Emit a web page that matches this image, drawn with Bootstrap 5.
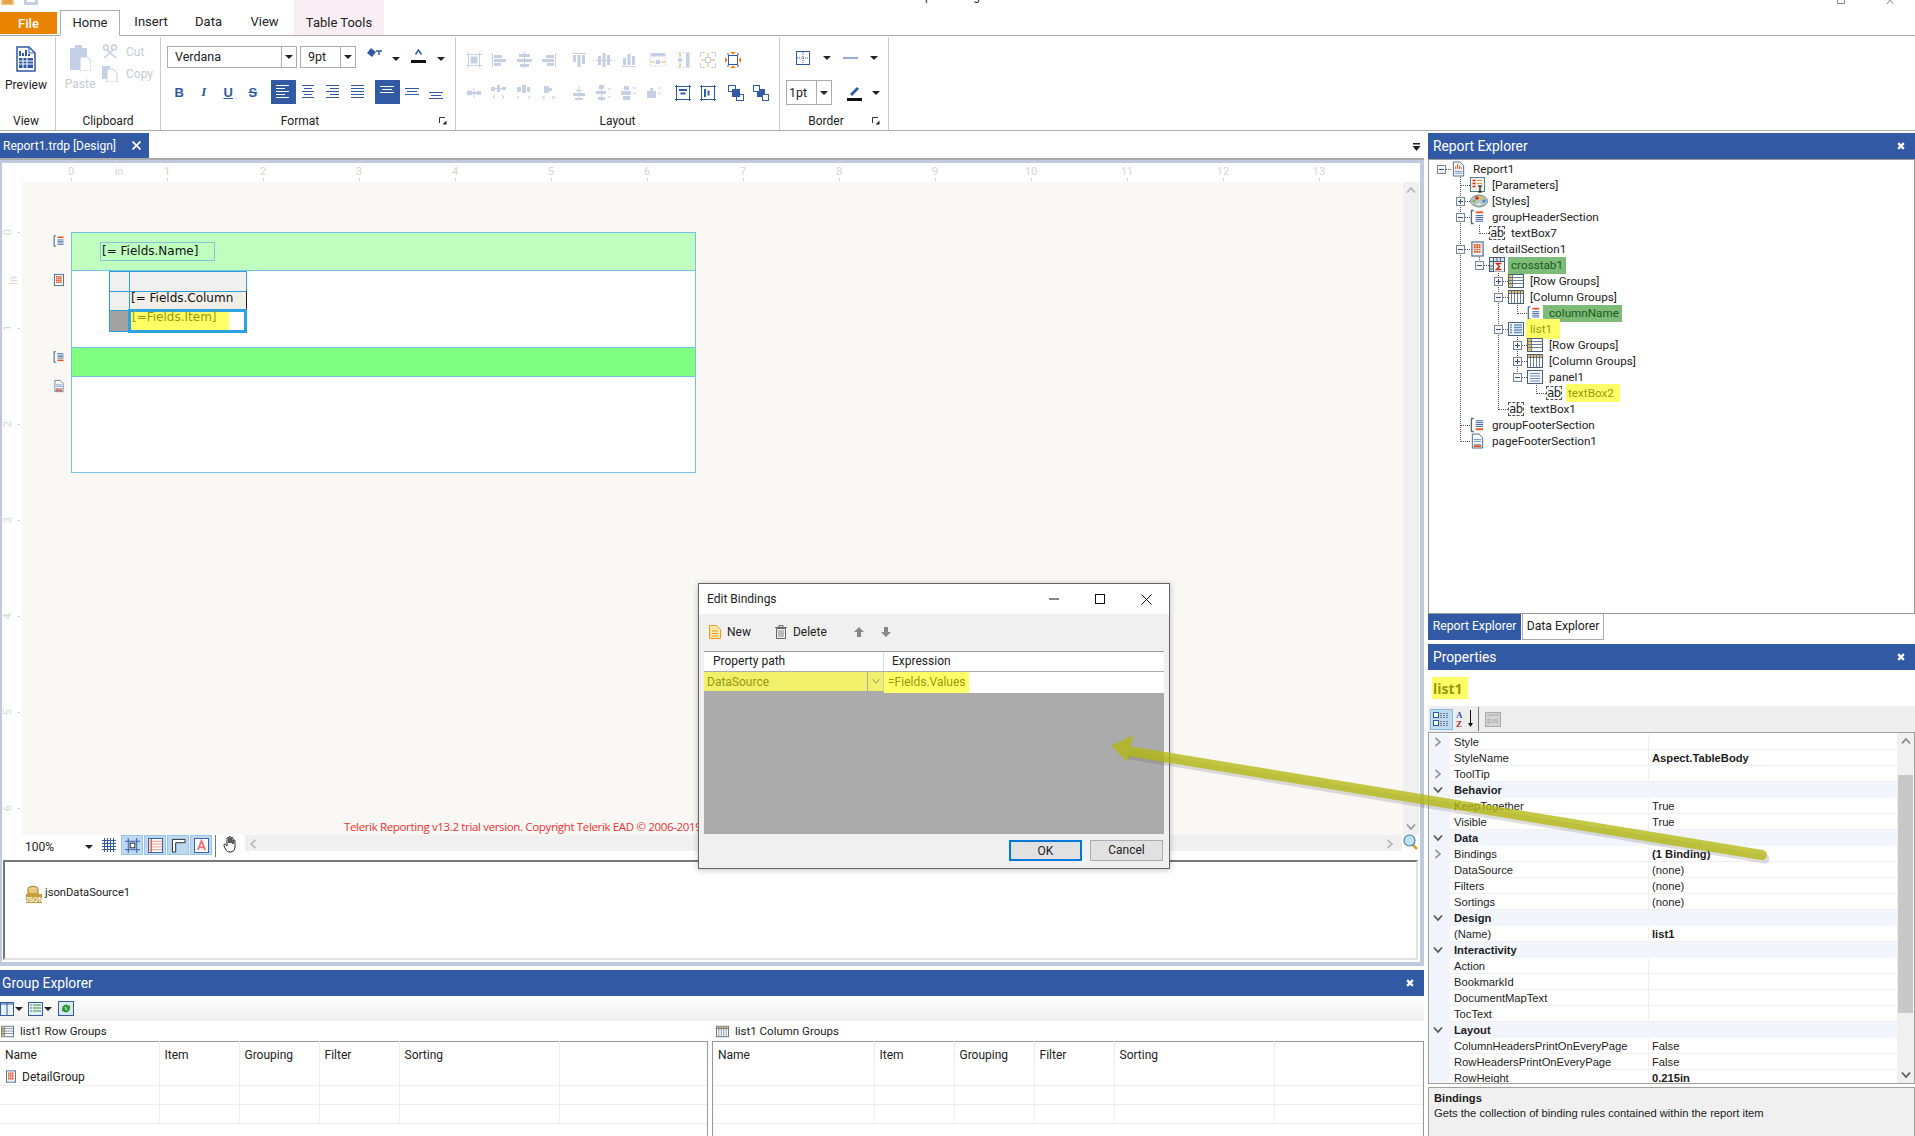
<!DOCTYPE html>
<html lang="en">
<head>
<meta charset="utf-8">
<title>Telerik Report Designer</title>
<link rel="stylesheet" href="https://cdn.jsdelivr.net/npm/bootstrap@5.3.0/dist/css/bootstrap.min.css">
<style>
:root{--blue:#3259a3;--dis:#c6d0e4;--line:#ababab}
html,body{margin:0;width:1915px;height:1136px;overflow:hidden;background:#fff}
body{position:relative;font:12px/16px Roboto,"Liberation Sans",sans-serif;color:#222}
.defs{position:absolute;width:0;height:0}
svg{display:block;flex:none}
/* window top */
.topbar{height:36px;border-bottom:1px solid var(--line)}
.winrow{height:10px;overflow:hidden}
.qat{height:5px;width:60px}
.wintitle{width:130px;margin-left:813px;margin-top:-10px;font-size:12px;line-height:13px;color:#333;white-space:nowrap;height:13px}
.winbtns{height:5px;width:58px;margin-left:auto;margin-right:20px}
.tabfile{width:57px;height:22px;background:#e98300;color:#fff;font-weight:500;font-size:13px;line-height:21px;text-align:center;margin-top:2px;border:0;padding:0;flex:none}
.rtab{font-size:13px;line-height:24px;height:25px;color:#222;text-align:center;flex:none}
.rtab.on{width:60px;margin-left:3px;border:1px solid var(--line);border-bottom:1px solid #fff;background:#fff;height:26px}
.rtab.t1{width:62px}.rtab.t2{width:53px}.rtab.t3{width:59px}
.rtab.tools{width:90px;background:#f9eef4;height:35px;padding-top:10px;margin-top:-10px;line-height:26px}
/* ribbon */
.ribbon{height:95px;border-bottom:1px solid var(--line)}
.rgrp{height:93px;margin-top:1px;border-right:1px solid #ccc;flex:none;display:flex;flex-direction:column}
.rgrp .body{height:74px;flex:none}
.g-view{width:56px}.g-clip{width:105px}.g-fmt{width:295px}.g-lay{width:324px}.g-bor{width:109px}
.g-view .body{padding-top:8px;padding-right:3px}
.g-view .lbl{padding-right:3px}
.g-clip .body{padding:7px 0 0 10px}
.g-fmt .body{padding:9px 0 0 6px}
.g-lay .body{padding:10px 0 0 5px}
.g-bor .body{padding:8px 0 0 6px}
.rgrp .lbl{flex:1;display:flex;align-items:center;justify-content:center;font-size:12px;color:#222}
.lblwrap{padding-right:8px}
.lblwrap span{flex:1;text-align:center}
.g-bor .lblwrap{padding-right:8px}
.bigic{margin-top:1px}
.bigtx{margin-top:5px;font-size:12px}
.pastecol{width:28px}
.cutcol{gap:6px}
.dis{color:#c6cbd6}
.cb{height:22px;border:1px solid var(--line);display:flex;align-items:center;background:#fff;font-size:12.5px;flex:none}
.cb span{flex:1;padding-left:7px}
.cb b{width:15px;height:100%;border-left:1px solid var(--line);display:flex;align-items:center;justify-content:center;flex:none}
.cb-font{width:130px}.cb-size{width:56px;margin-left:3px}
.cb-bw{width:46px;height:25px}.cb-bw span{padding-left:2px}
.tri{width:0;height:0;border:4px solid transparent;border-top:4px solid #222;border-bottom:0;flex:none;display:block}
.ic-fill{margin:-8px 0 0 11px}
.tri-a{margin:0 0 -3px 10px}
.ic-fc{margin:-3px 0 0 11px}
.tri-b{margin:0 0 -3px 11px}
.fmt2{margin-top:12px}
.rb{width:24.5px;height:24px;display:flex;align-items:center;justify-content:center;color:var(--blue);flex:none;font:700 13px "Liberation Sans",sans-serif}
.rb.it{font:italic 700 13px "Liberation Serif",serif}
.rb.act{background:var(--blue);color:#fff}
.mr6{margin-right:6px}.mr5{margin-right:5px}.mr4{margin-right:4px}.mr3{margin-right:3px}
.lc{width:25px;height:25px;display:flex;align-items:center;justify-content:center;color:var(--blue);flex:none}
.lc.off{color:var(--dis)}
.lay2{margin-top:8px}
.brow1{height:25px}
.ic-bd{margin-left:10px}
.tri-c{margin-left:13px}
.ic-ln{margin-left:12px}
.tri-d{margin-left:12px}
.brow2{margin-top:10px}
.ic-pen{margin-left:15px}
.tri-e{margin-left:10px}
/* left */
.main{height:1005px}
.leftc{width:1424px;flex:none}
.docstrip{height:29px;padding-top:2px;border-bottom:2px solid var(--line);flex:none}
.doctab{width:149px;height:25px;background:var(--blue);color:#fff;font-size:12px;padding-left:3px}
.docmenu{margin:10px 3px 0 auto}
.frame{height:806px;border:solid #c0cade;border-width:3px 4px 4px 2px;flex:none;background:#fff}
.rulert{height:19px;padding-left:45px;flex:none}
.rulert div{width:48px;flex:none;text-align:center;color:#d9d5cd;font-size:11px;line-height:13px;padding-top:2px}
.rulert i{display:block;width:1px;height:3px;background:#d9d5cd;margin:0 auto}
.canvasrow{height:653px;flex:none}
.ruleL{width:20px;padding-top:26px;flex:none;overflow:hidden}
.ruleL div{height:48px;display:flex;align-items:center;justify-content:flex-end;padding-right:2px;color:#d9d5cd;font-size:11px;gap:3px}
.ruleL span{writing-mode:vertical-rl;transform:rotate(180deg);line-height:12px}
.ruleL i{display:block;width:3px;height:1px;background:#d9d5cd}
.canvas{width:1381px;background:#f9f8f5;flex:none;padding-top:50px}
.sec{display:flex;flex:none}
.gut{width:49px;padding-left:31px;padding-top:1px;flex:none}
.band{width:625px;border:1px solid #74c3e6;margin-top:-1px;flex:none;background:#fff}
.s1{height:39px;background:#c0ffc0;padding:9px 0 0 28px;margin-top:0}
.s2{height:78px;padding-left:37px}
.s3{height:30px;background:#80ff80}
.s4{height:97px}
.vf{font:12px/17px "DejaVu Sans","Liberation Sans",sans-serif;color:#111;white-space:nowrap}
.namebox{width:115px;height:19px;border:1px solid #7cc8d8;padding-left:1px}
.xt{display:grid;grid-template-columns:20px 117px;grid-template-rows:20px 19px 21px;width:137px}
.xt>div{border:1px solid #2c9fd8;margin:0 -1px -1px 0;background:#f0f0f0}
.xt .cell2{background:#f1eee8;border-right-color:#222;border-bottom-color:#222;padding-left:1px;line-height:12px}
.xt .g{background:#a2a2a2}
.xt .sel{border:3px solid #2ca3e0;background:#fff;margin:-1px -1px -2px -1px;z-index:1;display:flex}
.xt .sel span{background:#ffff66;color:#98980c;width:98px;padding-left:1px;display:block;line-height:10px;height:100%}
.wm{margin-top:auto;padding-left:322px;color:#f03030;font-size:11.5px;line-height:14px;white-space:nowrap;padding-bottom:1px;font-family:"Open Sans",Roboto,sans-serif;letter-spacing:-.35px}
.vsb{width:16px;background:#f0f0f0;flex:none}
.vsb svg{opacity:.55}
.tbrow{height:24px;flex:none;margin-top:0}
.zoomcb{width:76px;height:23px;margin-left:19px;padding:0 4px;background:#fff;font-size:12px;flex:none}
.ic-grid{margin:3px 5px 0}
.tog{width:22px;height:20px;background:#bcd9f1;border:1px solid #9cc4e6;margin-right:1px;display:flex;align-items:center;justify-content:center;flex:none}
.vsep{width:1px;height:22px;background:#777;margin:0 6px 0 2px}
.hsb{height:23px;flex:1;margin-left:6px;background:linear-gradient(#f0f0f0 0 16px,#fff 16px)}
.flipx{transform:scaleX(-1)}
.mag{margin:-1px 1px 0}
.tray{height:100px;margin:1px 2px 0 1px;border:2px solid #e2e2e2;border-top-color:#777;border-left-color:#777;padding:24px 0 0 21px;flex:none;font-size:11.2px}
.tray span{margin:-1px 0 0 3px}
.pbar{height:26px;background:var(--blue);color:#fff;font-size:13.8px;line-height:26px;padding:0 10px 0 5px;flex:none}
.pbar.ge{margin-top:4px;padding-left:2px}
.pbar.pp{margin-top:4px}
.gtb{height:25px;background:linear-gradient(#fff,#efefef);flex:none}
.tb-t1{margin-left:1px}.tb-l{margin-left:5px}.tb-r{margin-left:6px}
.gpanels{gap:4px;flex:1;overflow:hidden}
.gp{width:708px;flex:none;height:115px;overflow:hidden}
.gp+.gp{width:712px}
.gl{height:20px;gap:5px;font-size:11.5px}
.gp+.gp .gl{padding-left:3px}
.gtbl{table-layout:fixed;width:100%;margin:0;border-top:1px solid #999;font-size:12px}
.gp+.gp .gbox{border-left:1px solid #999;border-right:1px solid #999}
.gp .gbox{border-right:1px solid #999;height:100px}
.gtbl col.c1{width:159px}.gp+.gp .gtbl col.c1{width:161px}
.gtbl col.c2{width:80px}.gtbl col.c5{width:160px}
.gtbl>*>tr>*{padding:0 0 0 5px;border:0;border-bottom:1px solid #eee;border-right:1px solid #eee;font-weight:400;height:19px;box-shadow:none;white-space:nowrap;vertical-align:middle;background:#fff;color:#222}
.gtbl thead th{height:27px;border-bottom:0;padding-bottom:0}
.gtbl .f td{height:17px}
.gtbl tr>*:last-child{border-right:0}
.dg{gap:5px}
/* right */
.rightc{width:487px;margin-left:4px;padding-top:2px;flex:none}
.tree{height:455px;border:1px solid #999;padding:1px 0 0 3px;flex:none;font-size:11.7px}
.tr{height:16px;display:flex;align-items:center;white-space:nowrap}
.c{width:19px;height:16px;flex:none;display:flex;align-items:center;justify-content:center;background-repeat:no-repeat}
.c.v{background-image:repeating-linear-gradient(#555 0 1px,transparent 1px 2px);background-position:9px 0;background-size:1px 100%}
.c.h{background-image:repeating-linear-gradient(90deg,#555 0 1px,transparent 1px 2px);background-position:10px 8px;background-size:9px 1px}
.c.vh{background-image:repeating-linear-gradient(#555 0 1px,transparent 1px 2px),repeating-linear-gradient(90deg,#555 0 1px,transparent 1px 2px);background-position:9px 0,10px 8px;background-size:1px 100%,9px 1px}
.c.uh{background-image:repeating-linear-gradient(#555 0 1px,transparent 1px 2px),repeating-linear-gradient(90deg,#555 0 1px,transparent 1px 2px);background-position:9px 0,10px 8px;background-size:1px 9px,9px 1px}
.mn,.pl{display:block;width:9px;height:9px;border:1px solid #7b8794;background:#f4f6f8 linear-gradient(#39517f,#39517f) center/5px 1px no-repeat}
.pl::after{content:"";display:block;width:1px;height:5px;background:#39517f;margin:1px 0 0 3px}
.ti{width:19px;flex:none;display:flex;align-items:center}
.ti.w16{width:16px}.ti.w18{width:18px}.ti.w20{width:20px}
.tt{padding:0 3px;line-height:16px}
.hlg{background:#7dbb78;color:#1c5a22;height:17px}
.hlg.cn{padding-left:6px}
.hly{background:#ffff66;color:#98980c}
.hly.l1{padding:2px 8px 2px 4px;height:20px}
.hly.t2{padding:1px 6px 1px 2px;height:18px}
.ab{display:block;width:16px;height:14px;border:1px dashed #555;font:11.5px/12px "DejaVu Sans",sans-serif;text-align:center;color:#222;letter-spacing:-.5px}
.wtabs{height:26px;flex:none}
.wt{background:var(--blue);color:#fff;width:93px;text-align:center;line-height:24px;font-size:12.2px}
.wt.off{background:#fff;color:#222;border:1px solid var(--line);border-top:0;width:82px;margin-left:1px}
.phead{height:36px;padding:7px 0 0 4px;flex:none}
.phead span{display:inline-block;background:#ffff66;color:#98980c;font:700 14px/20px "Open Sans",sans-serif;height:22px;padding-top:2px;width:36px;padding-left:1px;vertical-align:top}
.ptb{height:26px;background:#eee;padding-left:2px;gap:3px;flex:none}
.ptog{width:23px;height:21px;background:#bcdcf4;border:1px solid #86bde8;display:flex;align-items:center;justify-content:center}
.sep{width:1px;height:24px;background:#777;margin:0 3px 0 1px}
.pgrid{height:352px;border:1px solid #a0a0a0;overflow:hidden;flex:none;font:11.2px/17px "Liberation Sans",Arial,sans-serif;color:#1c1c1c}
.rows{width:468px;flex:none;padding-top:1px}
.pr{height:16px;display:flex;background:#fff;border-bottom:1px solid #f0f0f0}
.pr .k{width:21px;background:#f2f5fb;flex:none;display:flex;align-items:center;justify-content:center;padding-right:3px}
.pr .n{width:199px;flex:none;padding-left:4px;border-right:1px solid #f0f0f0;white-space:nowrap;height:15px}
.pr .w{flex:1;padding-left:3px;height:15px}
.pr.cat{background:#f2f5fb;font-weight:700;height:17px;margin-bottom:-1px;line-height:16px}
.pr.cat .n{border:0}
.pr b{font-weight:700}
.psb{width:17px;background:#f0f0f0;flex:none;display:flex;flex-direction:column;align-items:center}
.thumb{width:15px;height:238px;background:#c8c8c8;margin-top:30px;flex:none}
.desc{height:50px;margin-top:3px;border:1px solid #a0a0a0;background:#f0f0f0;padding:3px 5px;font:11.2px/15px "Liberation Sans",Arial,sans-serif;color:#1c1c1c;flex:none}
/* dialog */
.dlg{position:absolute;left:698px;top:583px;width:472px;height:286px;background:#f0f0f0;border:1px solid #666;box-shadow:0 1px 6px rgba(0,0,0,.25);z-index:5}
.dt{height:30px;background:#fff;padding-left:8px;font-size:12px;flex:none}
.dctl{width:46px;height:30px;display:flex;align-items:center;justify-content:center}
.dtb{height:37px;padding:0 0 1px 10px;flex:none;font-size:12px;gap:5px}
.dtb span{margin-left:1px}
.dtb .d1{margin-left:19px}.dtb .d2{margin-left:22px}.dtb .d3{margin-left:12px}
.dgrid{margin:0 5px;height:183px;background:#ababab;border-top:1px solid #999;flex:none}
.dh{height:20px;background:#fff;border-bottom:1px solid var(--line)}
.dh div{padding-left:8px;line-height:19px}
.dh div:first-child{width:180px;border-right:1px solid #ddd;padding-left:9px}
.dr{height:21px;background:#fff;color:#98980c;line-height:20px}
.dc1{width:163px;background:#f0f06a;padding-left:3px;border-bottom:2px solid #aaa}
.dc2{width:17px;background:#f0f06a;border-left:1px solid #aaa;border-right:1px solid #ccc;border-bottom:2px solid #aaa;display:flex;align-items:center;justify-content:center}
.dc3{width:85px;background:#ffff66;padding-left:4px}
.dbtns{gap:8px;padding:6px 6px 0 0;justify-content:flex-end}
.dbtn{width:73px;height:21px;padding:0;font-size:12px;line-height:17px;background:#e1e1e1;border:1px solid #adadad;border-radius:0;color:#222}
.dbtn.pri{border:2px solid #0078d7;line-height:16px}
.arrow{position:absolute;left:0;top:0;z-index:9;pointer-events:none}
</style>
</head>
<body>
<svg class="defs" xmlns="http://www.w3.org/2000/svg">
<symbol id="al-l" viewBox="0 0 16 16"><path d="M1 1.5h13M1 4.5h9M1 7.5h13M1 10.5h9M1 13.5h13" stroke="currentColor" fill="none"/></symbol>
<symbol id="al-c" viewBox="0 0 16 16"><path d="M2 1.5h12M4 4.5h8M2 7.5h12M4 10.5h8M2 13.5h12" stroke="currentColor" fill="none"/></symbol>
<symbol id="al-r" viewBox="0 0 16 16"><path d="M2 1.5h13M6 4.5h9M2 7.5h13M6 10.5h9M2 13.5h13" stroke="currentColor" fill="none"/></symbol>
<symbol id="al-j" viewBox="0 0 16 16"><path d="M2 1.5h13M2 4.5h13M2 7.5h13M2 10.5h13M2 13.5h13" stroke="currentColor" fill="none"/></symbol>
<symbol id="va-t" viewBox="0 0 16 16"><path d="M1 2.5h14M3 5.5h10M1 8.5h14" stroke="currentColor" fill="none"/></symbol>
<symbol id="va-m" viewBox="0 0 16 16"><path d="M1 4.5h14M3 7.5h10M1 10.5h14" stroke="currentColor" fill="none"/></symbol>
<symbol id="va-b" viewBox="0 0 16 16"><path d="M1 8.5h14M3 11.5h10M1 14.5h14" stroke="currentColor" fill="none"/></symbol>
<symbol id="launch" viewBox="0 0 8 8"><path d="M.5 6V.5H6" stroke="#333" fill="none"/><path d="M7.5 7.5H3.5L7.5 3.5z" fill="#222"/></symbol>
<symbol id="l1" viewBox="0 0 16 16"><path d="M0 2.5h16M0 13.5h16M2.5 0v16M13.5 0v16" stroke="currentColor" fill="none"/><rect x="4.5" y="4.5" width="7" height="7" fill="currentColor"/></symbol>
<symbol id="l2" viewBox="0 0 16 16"><path d="M1.5 1v14" stroke="currentColor"/><path d="M3 3h8v3H3zM3 7h12v3H3zM3 11h7v3H3z" fill="currentColor"/></symbol>
<symbol id="l3" viewBox="0 0 16 16"><path d="M8.5 0v16" stroke="currentColor"/><path d="M3 2h11v3H3zM1 7h15v3H1zM4 12h9v3H4z" fill="currentColor"/></symbol>
<symbol id="l4" viewBox="0 0 16 16"><path d="M14.5 1v14" stroke="currentColor"/><path d="M5 3h8v3H5zM1 7h12v3H1zM6 11h7v3H6z" fill="currentColor"/></symbol>
<symbol id="l5" viewBox="0 0 16 16"><path d="M1 1.5h14" stroke="currentColor"/><path d="M2 3h3v7H2zM6.5 3h3v12h-3zM11 3h3v9h-3z" fill="currentColor"/></symbol>
<symbol id="l6" viewBox="0 0 16 16"><path d="M0 8.5h16" stroke="currentColor"/><path d="M2 4h3v9H2zM6.5 1h3v14h-3zM11 3h3v10h-3z" fill="currentColor"/></symbol>
<symbol id="l7" viewBox="0 0 16 16"><path d="M1 14.5h14" stroke="currentColor"/><path d="M2 6h3v7H2zM6.5 2h3v11h-3zM11 4h3v9h-3z" fill="currentColor"/></symbol>
<symbol id="l8" viewBox="0 0 16 16"><rect x=".5" y="1" width="15" height="3.5" fill="currentColor"/><path d="M.5 6v8h15V6" stroke="currentColor" stroke-dasharray="1 1" fill="none"/><rect x="6" y="8" width="4" height="4" fill="currentColor"/><path d="M1 10h4M11 10h4" stroke="#f6d5a8" stroke-width="2"/></symbol>
<symbol id="l9" viewBox="0 0 16 16"><rect x="11" y=".5" width="3.5" height="15" fill="currentColor"/><path d="M9 .5H2M9 15.5H2" stroke="currentColor" stroke-dasharray="1 1" fill="none"/><rect x="3" y="6" width="4" height="4" fill="currentColor"/><path d="M5 1v4M5 11v4" stroke="#f6d5a8" stroke-width="2"/></symbol>
<symbol id="l10" viewBox="0 0 16 16"><path d="M.5 5V.5H5M11 .5h4.500V5M15.500 11v4.500H11M5 15.500H.5V11" stroke="currentColor" fill="none"/><rect x="5.500" y="5.500" width="5" height="5" fill="none" stroke="currentColor"/><path d="M8 1v4M8 11v4M1 8h4M11 8h4" stroke="#f6d5a8" stroke-width="2"/></symbol>
<symbol id="l11" viewBox="0 0 16 16"><rect x="3.500" y="3.500" width="9" height="9" fill="#fff" stroke="#3259a3"/><path d="M5 0l3 2.500L11 0zM5 16l3-2.500L11 16zM0 5l2.500 3L0 11zM16 5l-2.500 3L16 11z" fill="#e98300"/><path d="M3 1v2M13 1v2M3 13v2M13 13v2" stroke="#3259a3"/></symbol>
<symbol id="m1" viewBox="0 0 16 16"><path d="M3 5v6M8 3v10" stroke="currentColor"/><path d="M1 6h5v4H1zM6 7h5v2H6zM11 6h4v4h-4z" fill="currentColor"/></symbol>
<symbol id="m2" viewBox="0 0 16 16"><path d="M0 2h4v4H0zM6 0h3v7H6zM11 2h4v3h-4z" fill="currentColor"/><path d="M4 3.500h2M9 3.500h2" stroke="currentColor"/><path d="M4 10l-2 2 2 2M11 10l2 2-2 2" stroke="currentColor" fill="none"/></symbol>
<symbol id="m3" viewBox="0 0 16 16"><path d="M1 2h4v5H1zM6 0h4v8H6zM11 2h3v5h-3z" fill="currentColor"/><path d="M1 11l2 1.500-2 1.500M14 11l-2 1.500 2 1.500" stroke="currentColor" fill="none"/></symbol>
<symbol id="m4" viewBox="0 0 16 16"><path d="M3 1h5v2h3v3H8v2H3z" fill="currentColor"/><path d="M1 11l3 1.500-3 1.500M14 11l-3 1.500 3 1.500" stroke="currentColor" fill="none"/></symbol>
<symbol id="m5" viewBox="0 0 16 16"><path d="M8 1v14" stroke="currentColor"/><path d="M5 5h6v1H5zM2 8h12v3H2zM4 13h8v2H4z" fill="currentColor"/></symbol>
<symbol id="m6" viewBox="0 0 16 16"><path d="M5.500 1v15" stroke="currentColor"/><path d="M3 0h5v4H3zM0 6h10v3H0zM2 12h7v3H2z" fill="currentColor"/><path d="M12 5l1.500-2L15 5M12 11l1.500 2L15 11" stroke="currentColor" fill="none"/></symbol>
<symbol id="m7" viewBox="0 0 16 16"><path d="M3 1h5v4H3zM0 6h10v4H0zM2 11h7v4H2z" fill="currentColor"/><path d="M12 2l1.500 2L15 2M12 9l1.500-2L15 9" stroke="currentColor" fill="none"/></symbol>
<symbol id="m8" viewBox="0 0 16 16"><path d="M4 3h3v3h3v7H1V6h3z" fill="currentColor"/><path d="M12 2l1.500 2L15 2M12 9l1.500-2L15 9" stroke="currentColor" fill="none"/></symbol>
<symbol id="m9" viewBox="0 0 16 16"><path d="M0 1.500h16M0 14.500h16M1.500 0v16M14.500 0v16" stroke="currentColor" fill="none"/><path d="M4 4h8v2H4zM5.500 7.500h5v2h-5z" fill="currentColor"/></symbol>
<symbol id="m10" viewBox="0 0 16 16"><path d="M0 1.500h16M0 14.500h16M1.500 0v16M14.500 0v16" stroke="currentColor" fill="none"/><path d="M4 4h2v8H4zM7.500 5.500h2v5h-2z" fill="currentColor"/></symbol>
<symbol id="m11" viewBox="0 0 16 16"><rect x=".5" y=".5" width="7" height="6" fill="#fff" stroke="currentColor"/><rect x="8.500" y="9.500" width="7" height="6" fill="#fff" stroke="currentColor"/><rect x="4" y="4" width="8" height="8" fill="currentColor"/></symbol>
<symbol id="m12" viewBox="0 0 16 16"><rect x="4" y="4" width="8" height="8" fill="currentColor"/><rect x=".5" y=".5" width="6" height="6" fill="#fff" stroke="currentColor"/><rect x="9.500" y="9.500" width="6" height="6" fill="#fff" stroke="currentColor"/></symbol>
<symbol id="sh" viewBox="0 0 16 16"><path d="M1.500 1v14M1 1h3M1 15h3" stroke="#4d7080" fill="none" stroke-width="1.500"/><path d="M6 3h8" stroke="#e8501a" stroke-width="2"/><path d="M6 6.500h8M6 8.500h8M6 10.500h8M6 12.500h8" stroke="#3259a3"/></symbol>
<symbol id="sf" viewBox="0 0 16 16"><path d="M1.500 1v14M1 1h3M1 15h3" stroke="#4d7080" fill="none" stroke-width="1.500"/><path d="M6 3.500h8M6 5.500h8M6 7.500h8M6 9.500h8" stroke="#3259a3"/><path d="M6 12.500h8" stroke="#e8501a" stroke-width="2"/></symbol>
<symbol id="sd" viewBox="0 0 16 16"><rect x="2" y=".5" width="12" height="15" fill="#f4f7fa" stroke="#47688a" stroke-width="1.200"/><path d="M4 3.500h8M4 6h8M4 8.500h8M4 11h8" stroke="#e8501a" stroke-width="1.800" stroke-dasharray="2 .6"/></symbol>
<symbol id="sp" viewBox="0 0 16 16"><path d="M2.500.5h7l4 4v11h-11z" fill="#f8fafc" stroke="#47688a"/><path d="M4 6.500h8M4 8.500h8" stroke="#6a8fc2"/><path d="M4 11.500h8" stroke="#6a8fc2"/><path d="M4 13.500h8" stroke="#e8501a" stroke-width="2"/></symbol>
<symbol id="rep" viewBox="0 0 16 16"><path d="M2.500.5h7l4 4v11h-11z" fill="#f8fafc" stroke="#47688a"/><path d="M5 8V5M7 8V2.500M9 8V4.500M11 8V6" stroke="#e8501a"/><path d="M4 10.500h8M4 12.500h8" stroke="#6a8fc2"/></symbol>
<symbol id="par" viewBox="0 0 16 16"><rect x=".5" y=".5" width="14" height="14" fill="#f4f1ea" stroke="#4d8088"/><path d="M2.500 3.500h3M2.500 6.500h3M2.500 9.500h3" stroke="#d42a1a" stroke-width="1.500"/><path d="M7 3.500h5M7 6.500h5" stroke="#e89a40"/><path d="M8 9h4M8 15h4M10 9v6" stroke="#111" stroke-width="1.200"/></symbol>
<symbol id="pal" viewBox="0 0 18 16"><ellipse cx="9" cy="8" rx="8.500" ry="6" fill="#b8c6c2" stroke="#7b8d88"/><circle cx="7" cy="5" r="1.800" fill="#d42a2a"/><circle cx="11" cy="5" r="1.800" fill="#e8c030"/><circle cx="14" cy="8" r="1.800" fill="#4a90d8"/><circle cx="4" cy="8" r="1.500" fill="#7ab060"/><ellipse cx="9" cy="11" rx="2" ry="1.200" fill="#e8e8e0"/></symbol>
<symbol id="xt" viewBox="0 0 16 16"><rect x=".5" y=".5" width="15" height="14" fill="#dfe4ea" stroke="#48607a"/><path d="M.5 4.500h15M.5 9h4M.5 12h4M4.500.5v14M8 .5v4M11.500.5v4" stroke="#48607a"/><rect x="5" y="5" width="10" height="9.500" fill="#fff"/><path d="M12.500 6.500h-5l3 3-3 3h5" stroke="#d42a1a" stroke-width="1.500" fill="none"/></symbol>
<symbol id="rg" viewBox="0 0 16 16"><rect x=".5" y="1.500" width="15" height="13" fill="#fff" stroke="#48607a"/><rect x="1" y="2" width="3" height="12" fill="#e8c070"/><path d="M.5 4.500h15M.5 7.500h15M.5 10.500h15M4.500 1.500v13" stroke="#48607a" stroke-width=".8"/></symbol>
<symbol id="cg" viewBox="0 0 16 16"><rect x=".5" y="1.500" width="15" height="13" fill="#fff" stroke="#48607a"/><rect x="1" y="2" width="14" height="2.500" fill="#e8c070"/><path d="M.5 4.500h15M3.500 1.500v13M6.500 1.500v13M9.500 1.500v13M12.500 1.500v13" stroke="#48607a" stroke-width=".8"/></symbol>
<symbol id="li" viewBox="0 0 16 16"><rect x=".5" y="1.500" width="15" height="13" fill="#eef4fb" stroke="#48607a"/><path d="M2 4h2M6 4h8M2 6.500h2M6 6.500h8M2 9h2M6 9h8M2 11.500h2M6 11.500h8" stroke="#6a8fc2" stroke-width="1.400"/></symbol>
<symbol id="pn" viewBox="0 0 16 16"><rect x=".5" y="1.500" width="15" height="13" fill="#f6f8fa" stroke="#48607a"/><path d="M3 4.500h10M3 7h10M3 9.500h10M3 12h10" stroke="#6a8fc2"/></symbol>
<symbol id="chr" viewBox="0 0 8 10"><path d="M1.500 1L6 5l-4.500 4" stroke="#999" stroke-width="1.700" fill="none"/></symbol>
<symbol id="chd" viewBox="0 0 10 8"><path d="M1 1.500L5 6l4-4.500" stroke="#555" stroke-width="1.700" fill="none"/></symbol>
<symbol id="chu" viewBox="0 0 10 8"><path d="M1 6.500L5 2l4 4.500" stroke="#888" stroke-width="1.700" fill="none"/></symbol>
<symbol id="chl" viewBox="0 0 8 10"><path d="M6.500 1L2 5l4.500 4" stroke="#bbb" stroke-width="1.700" fill="none"/></symbol>
<symbol id="x7" viewBox="0 0 7 7"><path d="M1 1l5 5M6 1L1 6" stroke="#fff" stroke-width="2"/></symbol>
</svg>

<!-- top -->
<div class="topbar">
  <div class="winrow d-flex">
    <div class="qat d-flex gap-2 overflow-hidden">
      <svg width="16" height="5" viewBox="0 0 16 5"><path d="M1 0h13v5H1z" fill="#f5c77e"/><path d="M3 1h9M3 3h9" stroke="#d97b1a"/></svg>
      <svg width="14" height="5" viewBox="0 0 14 5"><path d="M0 0h14v5H0z" fill="#c6d0e4"/><path d="M3 0h8v2H3z" fill="#fff"/></svg>
    </div>
    <div class="wintitle">Telerik Report Designer</div>
    <div class="winbtns d-flex justify-content-between overflow-hidden">
      <svg width="10" height="4" viewBox="0 0 10 4"><path d="M.5 0v3.500h7V0" stroke="#888" fill="none"/></svg>
      <svg width="10" height="4" viewBox="0 0 10 4"><path d="M2 4L5 0l3 4" stroke="#888" fill="none"/></svg>
    </div>
  </div>
  <div class="d-flex">
    <button class="tabfile">File</button>
    <div class="rtab on">Home</div>
    <div class="rtab t1">Insert</div>
    <div class="rtab t2">Data</div>
    <div class="rtab t3">View</div>
    <div class="rtab tools">Table Tools</div>
  </div>
</div>

<!-- ribbon -->
<div class="ribbon d-flex">
  <div class="rgrp g-view">
    <div class="body d-flex flex-column align-items-center">
      <svg class="bigic" width="20" height="26" viewBox="0 0 20 26"><path d="M1 1h12l6 6v18H1z" fill="#fff" stroke="#3259a3" stroke-width="1.500"/><path d="M13 1v6h6" fill="none" stroke="#3259a3"/><path d="M4 10V5M7 10V7M10 10V4M13 10V8" stroke="#3259a3" stroke-width="2"/><path d="M3 12h14v10H3z" fill="#3259a3"/><path d="M3 15h14M3 18h14M7 12v10M11 12v10" stroke="#fff"/></svg>
      <div class="bigtx">Preview</div>
    </div>
    <div class="lbl">View</div>
  </div>
  <div class="rgrp g-clip">
    <div class="body d-flex">
      <div class="pastecol d-flex flex-column align-items-center">
        <svg class="bigic" width="22" height="26" viewBox="0 0 22 26"><path d="M1 3h5V0h7v3h5v22H1z" fill="#c4d0e6"/><path d="M11 12h7l4 4v10H11z" fill="#fff" stroke="#c4d0e6"/></svg>
        <div class="bigtx dis">Paste</div>
      </div>
      <div class="ms-2 d-flex flex-column cutcol">
        <div class="d-flex align-items-center gap-1"><svg width="16" height="16" viewBox="0 0 16 16"><circle cx="4" cy="3.500" r="2.500" fill="none" stroke="#c4d0e6" stroke-width="1.500"/><circle cx="12" cy="3.500" r="2.500" fill="none" stroke="#c4d0e6" stroke-width="1.500"/><path d="M5 6l9 8M11 6l-9 8" stroke="#c4d0e6" stroke-width="1.500"/></svg><span class="dis ms-1">Cut</span></div>
        <div class="d-flex align-items-center gap-1"><svg width="16" height="16" viewBox="0 0 16 16"><path d="M0 0h8v13H0z" fill="#c4d0e6"/><path d="M5 3h6l4 4v9H5z" fill="#fff" stroke="#c4d0e6"/></svg><span class="dis ms-1">Copy</span></div>
      </div>
    </div>
    <div class="lbl">Clipboard</div>
  </div>
  <div class="rgrp g-fmt">
    <div class="body">
      <div class="d-flex align-items-center">
        <div class="cb cb-font"><span>Verdana</span><b><i class="tri"></i></b></div>
        <div class="cb cb-size"><span>9pt</span><b><i class="tri"></i></b></div>
        <svg class="ic-fill" width="15" height="10" viewBox="0 0 15 10"><path d="M4 0l5 4-4 5-5-4z" fill="#3259a3"/><path d="M9 3h6M12 3v4" stroke="#3259a3" stroke-width="1.500"/></svg>
        <i class="tri tri-a"></i>
        <svg class="ic-fc" width="15" height="17" viewBox="0 0 15 17"><path d="M4.500 7.500L7.500 3l3 4.500" fill="none" stroke="#3259a3" stroke-width="1.500"/><rect y="13" width="15" height="3" fill="#111"/></svg>
        <i class="tri tri-b"></i>
      </div>
      <div class="d-flex fmt2">
        <div class="rb">B</div>
        <div class="rb it">I</div>
        <div class="rb text-decoration-underline">U</div>
        <div class="rb text-decoration-line-through mr6">S</div>
        <div class="rb act"><svg width="16" height="16"><use href="#al-l"/></svg></div>
        <div class="rb"><svg width="16" height="16"><use href="#al-c"/></svg></div>
        <div class="rb"><svg width="16" height="16"><use href="#al-r"/></svg></div>
        <div class="rb mr6"><svg width="16" height="16"><use href="#al-j"/></svg></div>
        <div class="rb act"><svg width="16" height="16"><use href="#va-t"/></svg></div>
        <div class="rb"><svg width="16" height="16"><use href="#va-m"/></svg></div>
        <div class="rb"><svg width="16" height="16"><use href="#va-b"/></svg></div>
      </div>
    </div>
    <div class="lbl lblwrap"><span>Format</span><svg width="8" height="8"><use href="#launch"/></svg></div>
  </div>
  <div class="rgrp g-lay">
    <div class="body">
      <div class="d-flex">
        <div class="lc off"><svg width="16" height="16"><use href="#l1"/></svg></div>
        <div class="lc off"><svg width="16" height="16"><use href="#l2"/></svg></div>
        <div class="lc off"><svg width="16" height="16"><use href="#l3"/></svg></div>
        <div class="lc off mr5"><svg width="16" height="16"><use href="#l4"/></svg></div>
        <div class="lc off"><svg width="16" height="16"><use href="#l5"/></svg></div>
        <div class="lc off"><svg width="16" height="16"><use href="#l6"/></svg></div>
        <div class="lc off mr4"><svg width="16" height="16"><use href="#l7"/></svg></div>
        <div class="lc off"><svg width="16" height="16"><use href="#l8"/></svg></div>
        <div class="lc off"><svg width="16" height="16"><use href="#l9"/></svg></div>
        <div class="lc off"><svg width="16" height="16"><use href="#l10"/></svg></div>
        <div class="lc"><svg width="16" height="16"><use href="#l11"/></svg></div>
      </div>
      <div class="d-flex lay2">
        <div class="lc off"><svg width="16" height="16"><use href="#m1"/></svg></div>
        <div class="lc off"><svg width="16" height="16"><use href="#m2"/></svg></div>
        <div class="lc off"><svg width="16" height="16"><use href="#m3"/></svg></div>
        <div class="lc off mr5"><svg width="16" height="16"><use href="#m4"/></svg></div>
        <div class="lc off"><svg width="16" height="16"><use href="#m5"/></svg></div>
        <div class="lc off"><svg width="16" height="16"><use href="#m6"/></svg></div>
        <div class="lc off"><svg width="16" height="16"><use href="#m7"/></svg></div>
        <div class="lc off mr4"><svg width="16" height="16"><use href="#m8"/></svg></div>
        <div class="lc"><svg width="16" height="16"><use href="#m9"/></svg></div>
        <div class="lc mr3"><svg width="16" height="16"><use href="#m10"/></svg></div>
        <div class="lc"><svg width="16" height="16"><use href="#m11"/></svg></div>
        <div class="lc"><svg width="16" height="16"><use href="#m12"/></svg></div>
      </div>
    </div>
    <div class="lbl">Layout</div>
  </div>
  <div class="rgrp g-bor">
    <div class="body">
      <div class="d-flex align-items-center brow1">
        <svg class="ic-bd" width="14" height="14" viewBox="0 0 14 14"><rect x=".5" y=".5" width="13" height="13" fill="none" stroke="#3259a3"/><path d="M7 1v12M1 7h12" stroke="#3259a3" stroke-dasharray="1 1"/></svg>
        <i class="tri tri-c"></i>
        <svg class="ic-ln" width="15" height="2" viewBox="0 0 15 2"><path d="M0 1h15" stroke="#3259a3"/></svg>
        <i class="tri tri-d"></i>
      </div>
      <div class="d-flex align-items-center brow2">
        <div class="cb cb-bw"><span>1pt</span><b><i class="tri"></i></b></div>
        <svg class="ic-pen" width="15" height="16" viewBox="0 0 15 16"><path d="M3 9l7-7 2 2-7 7z" fill="#3259a3"/><rect y="13" width="15" height="3" fill="#111"/></svg>
        <i class="tri tri-e"></i>
      </div>
    </div>
    <div class="lbl lblwrap"><span>Border</span><svg width="8" height="8"><use href="#launch"/></svg></div>
  </div>
</div>

<div class="main d-flex">
  <!-- LEFT -->
  <div class="leftc d-flex flex-column">
    <div class="docstrip d-flex">
      <div class="doctab d-flex align-items-center"><span>Report1.trdp [Design]</span><svg class="ms-auto me-2" width="9" height="9" viewBox="0 0 9 9"><path d="M.5.5l8 8M8.500.5l-8 8" stroke="#fff" stroke-width="1.700"/></svg></div>
      <svg class="docmenu" width="9" height="9" viewBox="0 0 9 9"><path d="M1 0h7v1.500H1z" fill="#222"/><path d="M.5 3h8L4.500 8z" fill="#222"/></svg>
    </div>
    <div class="frame d-flex flex-column">
      <div class="rulert d-flex">
        <div>0<i></i></div><div>in</div><div>1<i></i></div><div></div><div>2<i></i></div><div></div><div>3<i></i></div><div></div><div>4<i></i></div><div></div><div>5<i></i></div><div></div><div>6<i></i></div><div></div><div>7<i></i></div><div></div><div>8<i></i></div><div></div><div>9<i></i></div><div></div><div>10<i></i></div><div></div><div>11<i></i></div><div></div><div>12<i></i></div><div></div><div>13<i></i></div>
      </div>
      <div class="canvasrow d-flex">
        <div class="ruleL">
          <div><span>0</span><i></i></div><div><span>in</span></div><div><span>1</span><i></i></div><div></div><div><span>2</span><i></i></div><div></div><div><span>3</span><i></i></div><div></div><div><span>4</span><i></i></div><div></div><div><span>5</span><i></i></div><div></div><div><span>6</span><i></i></div>
        </div>
        <div class="canvas d-flex flex-column">
          <div class="sec"><div class="gut"><svg width="12" height="16"><use href="#sh"/></svg></div><div class="band s1"><div class="namebox vf">[= Fields.Name]</div></div></div>
          <div class="sec"><div class="gut"><svg width="12" height="16"><use href="#sd"/></svg></div><div class="band s2">
            <div class="xt vf">
              <div></div><div></div>
              <div></div><div class="cell2">[= Fields.Column</div>
              <div class="g"></div><div class="sel"><span>[=Fields.Item]</span></div>
            </div>
          </div></div>
          <div class="sec"><div class="gut"><svg width="12" height="16"><use href="#sf"/></svg></div><div class="band s3"></div></div>
          <div class="sec"><div class="gut"><svg width="12" height="16"><use href="#sp"/></svg></div><div class="band s4"></div></div>
          <div class="wm">Telerik Reporting v13.2 trial version. Copyright Telerik EAD © 2006-2019.</div>
        </div>
        <div class="vsb d-flex flex-column justify-content-between align-items-center py-1"><svg width="10" height="8"><use href="#chu"/></svg><svg width="10" height="8"><use href="#chd"/></svg></div>
      </div>
      <div class="tbrow d-flex align-items-start">
        <div class="zoomcb d-flex align-items-center"><span>100%</span><i class="tri ms-auto"></i></div>
        <svg class="ic-grid" width="14" height="14" viewBox="0 0 14 14"><path d="M0 2.500h14M0 5.500h14M0 8.500h14M0 11.500h14M2.500 0v14M5.500 0v14M8.500 0v14M11.500 0v14" stroke="#3259a3"/></svg>
        <div class="tog"><svg width="15" height="15" viewBox="0 0 16 16"><path d="M0 3.500h16M0 12.500h16M3.500 0v16M12.500 0v16" stroke="#3259a3"/><rect x="5.500" y="5.500" width="5" height="5" fill="#fff" stroke="#222"/></svg></div>
        <div class="tog"><svg width="15" height="15" viewBox="0 0 16 16"><rect x=".5" y=".5" width="15" height="15" fill="#fff" stroke="#3259a3"/><path d="M3.500 1v14" stroke="#e8501a" stroke-width="1.500"/><path d="M1 3.500h14M1 6.500h14M1 9.500h14M1 12.500h14" stroke="#e8907a"/></svg></div>
        <div class="tog"><svg width="15" height="15" viewBox="0 0 16 16"><path d="M1.500 15V1.500H15V5H5v10z" fill="#fff" stroke="#222"/></svg></div>
        <div class="tog"><svg width="15" height="15" viewBox="0 0 16 16"><rect x=".5" y=".5" width="15" height="15" fill="#fff" stroke="#3259a3"/><path d="M4 13L8 3l4 10M5.500 10h5" stroke="#f07070" stroke-width="1.800" fill="none"/></svg></div>
        <div class="vsep"></div>
        <svg width="17" height="18" viewBox="0 0 17 18"><path d="M5 9V3.500a1 1 0 012 0V8V2.500a1 1 0 012 0V8V3.500a1 1 0 012 0V9V6a1 1 0 012 0v6c0 3-2 5-5 5-2.500 0-3.500-1-4.500-3L2 10.500c-.6-1.200 1-2 2-.8L5 11z" fill="#fff" stroke="#222"/></svg>
        <div class="hsb d-flex justify-content-between ps-1 pe-2 pt-1"><svg width="8" height="10"><use href="#chl"/></svg><svg class="flipx" width="8" height="10"><use href="#chl"/></svg></div>
        <svg class="mag" width="16" height="17" viewBox="0 0 16 17"><path d="M9 10l5 5" stroke="#d99a20" stroke-width="2.500"/><circle cx="6.500" cy="6.500" r="5.500" fill="#bfe0f5" stroke="#4a80a8" stroke-width="1.200"/></svg>
      </div>
      <div class="tray d-flex align-items-start">
        <svg width="16" height="17" viewBox="0 0 16 17"><ellipse cx="7" cy="2.500" rx="5" ry="2" fill="#f0d690" stroke="#a07820"/><path d="M2 3v5h10V3" fill="#e8c878" stroke="#a07820"/><rect y="8" width="16" height="9" fill="#c89c38"/><text x="8" y="15.500" text-anchor="middle" font-size="6.500" font-weight="700" fill="#fff" font-family="Liberation Sans">JSON</text></svg>
        <span>jsonDataSource1</span>
      </div>
    </div>
    <div class="pbar ge d-flex align-items-center justify-content-between"><span>Group Explorer</span><svg width="8" height="8"><use href="#x7"/></svg></div>
    <div class="gtb d-flex align-items-center">
      <svg width="14" height="14" viewBox="0 0 14 14"><rect x=".5" y=".5" width="13" height="13" fill="#e8f0fa" stroke="#3259a3"/><path d="M7 0v14" stroke="#3259a3"/><path d="M1 2h12" stroke="#3259a3"/></svg>
      <i class="tri tb-t1"></i>
      <svg class="tb-l" width="15" height="14" viewBox="0 0 15 14"><rect x=".5" y=".5" width="14" height="13" fill="#e8f0fa" stroke="#3259a3"/><path d="M2 3h2M5 3h8M2 6h2M5 6h8M2 9h2M5 9h8" stroke="#3a8a3a"/></svg>
      <i class="tri tb-t1"></i>
      <svg class="tb-r" width="16" height="15" viewBox="0 0 16 15"><rect x=".5" y=".5" width="15" height="14" fill="#dde8f5" stroke="#3259a3"/><path d="M4 7a4 4 0 017-2l1-1v4H8l1-1a2 2 0 00-3 0zM12 8a4 4 0 01-7 2l-1 1V7h4L7 8a2 2 0 003 0z" fill="#2f9a2f"/></svg>
    </div>
    <div class="gpanels d-flex">
      <div class="gp">
        <div class="gl d-flex align-items-center"><svg width="15" height="13"><use href="#rg"/></svg><span>list1 Row Groups</span></div>
        <div class="gbox"><table class="table gtbl">
          <colgroup><col class="c1"><col class="c2"><col class="c2"><col class="c2"><col class="c5"><col></colgroup>
          <thead><tr><th>Name</th><th>Item</th><th>Grouping</th><th>Filter</th><th>Sorting</th><th></th></tr></thead>
          <tbody>
            <tr class="f"><td><span class="d-flex align-items-center dg"><svg width="12" height="13"><use href="#sd"/></svg>DetailGroup</span></td><td></td><td></td><td></td><td></td><td></td></tr>
            <tr><td></td><td></td><td></td><td></td><td></td><td></td></tr>
            <tr><td></td><td></td><td></td><td></td><td></td><td></td></tr>
          </tbody>
        </table></div>
      </div>
      <div class="gp">
        <div class="gl d-flex align-items-center"><svg width="15" height="13"><use href="#cg"/></svg><span>list1 Column Groups</span></div>
        <div class="gbox"><table class="table gtbl">
          <colgroup><col class="c1"><col class="c2"><col class="c2"><col class="c2"><col class="c5"><col></colgroup>
          <thead><tr><th>Name</th><th>Item</th><th>Grouping</th><th>Filter</th><th>Sorting</th><th></th></tr></thead>
          <tbody>
            <tr class="f"><td></td><td></td><td></td><td></td><td></td><td></td></tr>
            <tr><td></td><td></td><td></td><td></td><td></td><td></td></tr>
            <tr><td></td><td></td><td></td><td></td><td></td><td></td></tr>
          </tbody>
        </table></div>
      </div>
    </div>
  </div>

  <!-- RIGHT -->
  <div class="rightc d-flex flex-column">
    <div class="pbar d-flex align-items-center justify-content-between"><span>Report Explorer</span><svg width="8" height="8"><use href="#x7"/></svg></div>
    <div class="tree">
      <div class="tr"><div class="c h"><i class="mn"></i></div><div class="ti"><svg width="15" height="16"><use href="#rep"/></svg></div><span class="tt">Report1</span></div>
      <div class="tr"><div class="c"></div><div class="c vh"></div><div class="ti"><svg width="16" height="16"><use href="#par"/></svg></div><span class="tt">[Parameters]</span></div>
      <div class="tr"><div class="c"></div><div class="c vh"><i class="pl"></i></div><div class="ti"><svg width="18" height="16"><use href="#pal"/></svg></div><span class="tt">[Styles]</span></div>
      <div class="tr"><div class="c"></div><div class="c vh"><i class="mn"></i></div><div class="ti"><svg width="15" height="16"><use href="#sh"/></svg></div><span class="tt">groupHeaderSection</span></div>
      <div class="tr"><div class="c"></div><div class="c v"></div><div class="c uh"></div><div class="ti"><span class="ab">ab</span></div><span class="tt">textBox7</span></div>
      <div class="tr"><div class="c"></div><div class="c vh"><i class="mn"></i></div><div class="ti"><svg width="15" height="16"><use href="#sd"/></svg></div><span class="tt">detailSection1</span></div>
      <div class="tr"><div class="c"></div><div class="c v"></div><div class="c uh"><i class="mn"></i></div><div class="ti"><svg width="16" height="16"><use href="#xt"/></svg></div><span class="tt hlg">crosstab1</span></div>
      <div class="tr"><div class="c"></div><div class="c v"></div><div class="c"></div><div class="c vh"><i class="pl"></i></div><div class="ti"><svg width="16" height="16"><use href="#rg"/></svg></div><span class="tt">[Row Groups]</span></div>
      <div class="tr"><div class="c"></div><div class="c v"></div><div class="c"></div><div class="c vh"><i class="mn"></i></div><div class="ti"><svg width="16" height="16"><use href="#cg"/></svg></div><span class="tt">[Column Groups]</span></div>
      <div class="tr"><div class="c"></div><div class="c v"></div><div class="c"></div><div class="c v"></div><div class="c uh"></div><div class="ti w16"><svg width="14" height="16"><use href="#sh"/></svg></div><span class="tt hlg cn">columnName</span></div>
      <div class="tr"><div class="c"></div><div class="c v"></div><div class="c"></div><div class="c vh"><i class="mn"></i></div><div class="ti w18"><svg width="16" height="16"><use href="#li"/></svg></div><span class="tt hly l1">list1</span></div>
      <div class="tr"><div class="c"></div><div class="c v"></div><div class="c"></div><div class="c v"></div><div class="c vh"><i class="pl"></i></div><div class="ti"><svg width="16" height="16"><use href="#rg"/></svg></div><span class="tt">[Row Groups]</span></div>
      <div class="tr"><div class="c"></div><div class="c v"></div><div class="c"></div><div class="c v"></div><div class="c vh"><i class="pl"></i></div><div class="ti"><svg width="16" height="16"><use href="#cg"/></svg></div><span class="tt">[Column Groups]</span></div>
      <div class="tr"><div class="c"></div><div class="c v"></div><div class="c"></div><div class="c v"></div><div class="c uh"><i class="mn"></i></div><div class="ti"><svg width="16" height="16"><use href="#pn"/></svg></div><span class="tt">panel1</span></div>
      <div class="tr"><div class="c"></div><div class="c v"></div><div class="c"></div><div class="c v"></div><div class="c"></div><div class="c uh"></div><div class="ti w20"><span class="ab">ab</span></div><span class="tt hly t2">textBox2</span></div>
      <div class="tr"><div class="c"></div><div class="c v"></div><div class="c"></div><div class="c uh"></div><div class="ti"><span class="ab">ab</span></div><span class="tt">textBox1</span></div>
      <div class="tr"><div class="c"></div><div class="c vh"></div><div class="ti"><svg width="15" height="16"><use href="#sf"/></svg></div><span class="tt">groupFooterSection</span></div>
      <div class="tr"><div class="c"></div><div class="c uh"></div><div class="ti"><svg width="15" height="16"><use href="#sp"/></svg></div><span class="tt">pageFooterSection1</span></div>
    </div>
    <div class="wtabs d-flex"><div class="wt">Report Explorer</div><div class="wt off">Data Explorer</div></div>
    <div class="pbar pp d-flex align-items-center justify-content-between"><span>Properties</span><svg width="8" height="8"><use href="#x7"/></svg></div>
    <div class="phead"><span>list1</span></div>
    <div class="ptb d-flex align-items-center">
      <div class="ptog"><svg width="17" height="15" viewBox="0 0 17 15"><rect x=".5" y=".5" width="5" height="5" fill="#fff" stroke="#3259a3"/><rect x=".5" y="8.500" width="5" height="5" fill="#fff" stroke="#3259a3"/><path d="M7 1.500h9M7 3.500h9M7 5.500h9M7 9.500h9M7 11.500h9M7 13.500h9" stroke="#778" stroke-dasharray="2 1"/></svg></div>
      <svg width="18" height="18" viewBox="0 0 18 18"><text x="0" y="8" font-size="9" font-family="Liberation Serif" font-weight="700" fill="#3259a3">A</text><text x="0" y="17" font-size="9" font-family="Liberation Serif" font-weight="700" fill="#b03040">Z</text><path d="M14.500 0v15" stroke="#111"/><path d="M12 13h5l-2.500 4z" fill="#111"/></svg>
      <div class="sep"></div>
      <svg width="16" height="15" viewBox="0 0 16 15"><rect x=".5" y=".5" width="15" height="14" fill="#d4d4d4" stroke="#aaa"/><path d="M2 3h12M3 7h2v4H3zM7 8h6M7 10h6" stroke="#aaa" fill="none"/></svg>
    </div>
    <div class="pgrid d-flex">
      <div class="rows">
        <div class="pr"><div class="k"><svg width="8" height="10"><use href="#chr"/></svg></div><div class="n">Style</div><div class="w"></div></div>
        <div class="pr"><div class="k"></div><div class="n">StyleName</div><div class="w"><b>Aspect.TableBody</b></div></div>
        <div class="pr"><div class="k"><svg width="8" height="10"><use href="#chr"/></svg></div><div class="n">ToolTip</div><div class="w"></div></div>
        <div class="pr cat"><div class="k"><svg width="10" height="8"><use href="#chd"/></svg></div><div class="n">Behavior</div></div>
        <div class="pr"><div class="k"></div><div class="n">KeepTogether</div><div class="w">True</div></div>
        <div class="pr"><div class="k"></div><div class="n">Visible</div><div class="w">True</div></div>
        <div class="pr cat"><div class="k"><svg width="10" height="8"><use href="#chd"/></svg></div><div class="n">Data</div></div>
        <div class="pr"><div class="k"><svg width="8" height="10"><use href="#chr"/></svg></div><div class="n">Bindings</div><div class="w"><b>(1 Binding)</b></div></div>
        <div class="pr"><div class="k"></div><div class="n">DataSource</div><div class="w">(none)</div></div>
        <div class="pr"><div class="k"></div><div class="n">Filters</div><div class="w">(none)</div></div>
        <div class="pr"><div class="k"></div><div class="n">Sortings</div><div class="w">(none)</div></div>
        <div class="pr cat"><div class="k"><svg width="10" height="8"><use href="#chd"/></svg></div><div class="n">Design</div></div>
        <div class="pr"><div class="k"></div><div class="n">(Name)</div><div class="w"><b>list1</b></div></div>
        <div class="pr cat"><div class="k"><svg width="10" height="8"><use href="#chd"/></svg></div><div class="n">Interactivity</div></div>
        <div class="pr"><div class="k"></div><div class="n">Action</div><div class="w"></div></div>
        <div class="pr"><div class="k"></div><div class="n">BookmarkId</div><div class="w"></div></div>
        <div class="pr"><div class="k"></div><div class="n">DocumentMapText</div><div class="w"></div></div>
        <div class="pr"><div class="k"></div><div class="n">TocText</div><div class="w"></div></div>
        <div class="pr cat"><div class="k"><svg width="10" height="8"><use href="#chd"/></svg></div><div class="n">Layout</div></div>
        <div class="pr"><div class="k"></div><div class="n">ColumnHeadersPrintOnEveryPage</div><div class="w">False</div></div>
        <div class="pr"><div class="k"></div><div class="n">RowHeadersPrintOnEveryPage</div><div class="w">False</div></div>
        <div class="pr"><div class="k"></div><div class="n">RowHeight</div><div class="w"><b>0.215in</b></div></div>
      </div>
      <div class="psb">
        <svg class="mt-1" width="10" height="8"><use href="#chu"/></svg>
        <div class="thumb"></div>
        <svg class="mt-auto mb-1" width="10" height="8"><use href="#chd"/></svg>
      </div>
    </div>
    <div class="desc"><b>Bindings</b><br>Gets the collection of binding rules contained within the report item</div>
  </div>
</div>

<!-- dialog -->
<div class="dlg d-flex flex-column">
  <div class="dt d-flex align-items-center">
    <span>Edit Bindings</span>
    <div class="d-flex ms-auto">
      <div class="dctl"><svg width="10" height="2" viewBox="0 0 10 2"><path d="M0 1h10" stroke="#111"/></svg></div>
      <div class="dctl"><svg width="10" height="10" viewBox="0 0 10 10"><rect x=".5" y=".5" width="9" height="9" fill="none" stroke="#111"/></svg></div>
      <div class="dctl"><svg width="11" height="11" viewBox="0 0 11 11"><path d="M.5.5l10 10M10.500.5l-10 10" stroke="#111"/></svg></div>
    </div>
  </div>
  <div class="dtb d-flex align-items-center">
    <svg width="12" height="14" viewBox="0 0 12 14"><path d="M.5.5h7l4 4v9H.5z" fill="#fbe7a8" stroke="#e89a20"/><path d="M3 6h6M3 8.500h6M3 11h6" stroke="#e89a20"/></svg>
    <span>New</span>
    <svg class="d1" width="12" height="14" viewBox="0 0 12 14"><path d="M0 2.500h12M4 2V.5h4V2" stroke="#666" fill="none"/><path d="M1.500 3.500h9v10h-9z" fill="#eee" stroke="#666"/><path d="M4 5v7M6 5v7M8 5v7" stroke="#888"/></svg>
    <span>Delete</span>
    <svg class="d2" width="10" height="10" viewBox="0 0 10 10"><path d="M5 0l5 5H7v5H3V5H0z" fill="#888"/></svg>
    <svg class="d3" width="10" height="10" viewBox="0 0 10 10"><path d="M5 10L0 5h3V0h4v5h3z" fill="#888"/></svg>
  </div>
  <div class="dgrid">
    <div class="dh d-flex"><div>Property path</div><div>Expression</div></div>
    <div class="dr d-flex"><div class="dc1">DataSource</div><div class="dc2"><svg width="10" height="7" viewBox="0 0 10 8"><path d="M1 1.500L5 6l4-4.500" stroke="#888" fill="none"/></svg></div><div class="dc3">=Fields.Values</div></div>
  </div>
  <div class="dbtns d-flex">
    <button class="btn dbtn pri">OK</button>
    <button class="btn dbtn">Cancel</button>
  </div>
</div>

<!-- annotation arrow -->
<svg class="arrow" width="1915" height="1136" viewBox="0 0 1915 1136">
  <path d="M1130 755L1765 859" stroke="#555" stroke-opacity=".2" stroke-width="9" stroke-linecap="round"/>
  <g opacity=".78">
    <path d="M1128 751L1762 855" stroke="#b4b910" stroke-width="10" stroke-linecap="round"/>
    <path d="M1113 746L1132 737L1129 749L1127 760Z" fill="#b4b910" stroke="#b4b910" stroke-width="2" stroke-linejoin="round"/>
  </g>
</svg>
<script src="https://cdn.jsdelivr.net/npm/bootstrap@5.3.0/dist/js/bootstrap.bundle.min.js"></script>
</body>
</html>
